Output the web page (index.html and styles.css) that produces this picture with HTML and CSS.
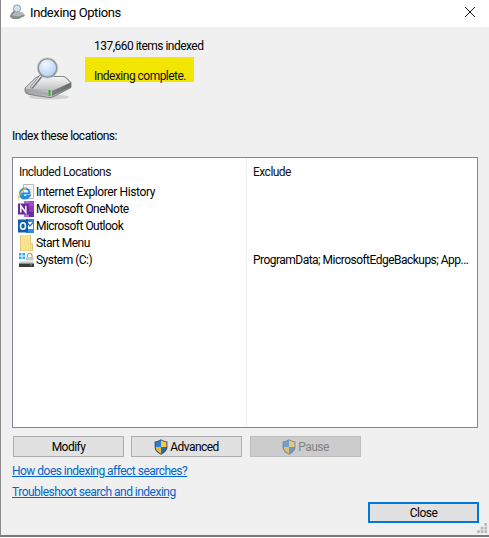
FILE: index.html
```html
<!DOCTYPE html>
<html lang="en">
<head>
<meta charset="utf-8">
<title>Indexing Options</title>
<link rel="stylesheet" href="styles.css">
</head>
<body>
<svg class="defs" width="0" height="0" aria-hidden="true">
  <defs>
    <symbol id="shield" viewBox="0 0 14 16">
      <path d="M7 .2C5.200 1.500 3 2.200 .6 2.400v5.600c0 3.500 2.800 6 6.400 7.800 3.600-1.800 6.400-4.300 6.400-7.800V2.400C11 2.200 8.800 1.500 7 .2z" fill="#46505c"/>
      <path d="M7 1.300V8H1.600V3.300C3.500 3.100 5.400 2.400 7 1.300z" fill="#2a7fd0"/>
      <path d="M7 1.300V8h5.400V3.300C10.500 3.100 8.600 2.400 7 1.300z" fill="#f8c84a"/>
      <path d="M7 8v6.700C4.300 13.300 1.800 11.300 1.600 8z" fill="#f3b62f"/>
      <path d="M7 8v6.700c2.700-1.400 5.200-3.400 5.400-6.700z" fill="#1f6fc0"/>
    </symbol>
  </defs>
</svg>
<div class="window">
  <header class="titlebar">
    <svg class="title-icon" viewBox="0 0 16 16">
      <path d="M1 11 4.500 8H13L15.500 10.500V12L10 15H4L1 13z" fill="#b4b8bb"/>
      <path d="M1 11 9 12.500 15.500 10.500V12L9 15H4L1 13z" fill="#8a8f93"/>
      <rect x="8.500" y="12.800" width="1.200" height="1.800" fill="#3fb52c"/>
      <circle cx="8" cy="4.500" r="3.600" fill="#cfe2f5" stroke="#8f9aa3" stroke-width="1"/>
      <path d="M5.500 7 2.500 10.500" stroke="#7a8085" stroke-width="1.400"/>
    </svg>
    <span class="title-text">Indexing Options</span>
    <svg class="close-x" viewBox="0 0 10 10">
      <path d="M0 0 10 10M10 0 0 10" stroke="#111" stroke-width="1" fill="none"/>
    </svg>
  </header>
  <main class="content">
    <section class="status">
      <svg class="drive" viewBox="0 0 48 48">
        <defs>
          <linearGradient id="driveTop" x1="0" y1="0" x2="0" y2="1">
            <stop offset="0" stop-color="#f4f4f4"/>
            <stop offset="1" stop-color="#c2c4c4"/>
          </linearGradient>
          <linearGradient id="driveFront" x1="0" y1="0" x2="1" y2="0">
            <stop offset="0" stop-color="#9a9d9e"/>
            <stop offset=".55" stop-color="#bfc1c2"/>
            <stop offset="1" stop-color="#6f7274"/>
          </linearGradient>
          <radialGradient id="lens" cx=".4" cy=".3" r=".85">
            <stop offset="0" stop-color="#f2f8fe"/>
            <stop offset="1" stop-color="#a5c6ea"/>
          </radialGradient>
        </defs>
        <ellipse cx="25" cy="41" rx="20" ry="2.500" fill="#000" opacity=".12"/>
        <path d="M1 32 12 21.500Q13 20.500 15 20.500H39Q41 20.500 42.500 22L47 26.500V31.500L30 40.500Q28 41.800 25 41.500L5 38.500Q1 37.500 1 35z" fill="url(#driveFront)" stroke="#717476" stroke-width=".8"/>
        <path d="M1.500 32 12.500 22Q13.500 21 15 21H39Q41 21 42 22.500L46.500 26.500 31 33.500Q29.500 34 27 33.800L3.500 33Q1.500 33 1.500 32z" fill="url(#driveTop)"/>
        <path d="M4 35 24 36.500V39.500L6 37z" fill="#a9acad"/>
        <rect x="24.500" y="34" width="2" height="6" fill="#35b52a"/>
        <path d="M28 35V40L46 30.500V27.500z" fill="#5f6264" opacity=".65"/>
        <path d="M8 31 17 20" stroke="#6a6f72" stroke-width="3.400" stroke-linecap="round"/>
        <path d="M7.500 31 16.500 20" stroke="#dfe1e2" stroke-width="1.300" stroke-linecap="round"/>
        <circle cx="23.500" cy="12" r="9.300" fill="url(#lens)" stroke="#8a949b" stroke-width="1.600"/>
        <circle cx="23.500" cy="12" r="10.400" fill="none" stroke="#c4c9cd" stroke-width=".7"/>
      </svg>
      <div class="status-text">
        <p class="count">137,660 items indexed</p>
        <p class="state">Indexing complete.</p>
      </div>
    </section>
    <p class="locations-label">Index these locations:</p>
    <section class="list">
      <div class="col col-included">
        <div class="col-head">Included Locations</div>
        <div class="row">
          <svg class="row-icon" viewBox="0 0 16 16">
            <path d="M5.500 .5H15.500V14.500H5.500z" fill="#fafafa" stroke="#b9b9b9"/>
            <path d="M10 5.500H13.500M12 8H13.500M12 10.500H13.500" stroke="#c7c7c7"/>
            <path d="M2 9.500H11.500C11.500 6.500 9.500 4.500 7 4.500S2 6.500 2 9.500C2 12.500 4 14.500 7 14.500 9 14.500 10.500 13.500 11.500 12H9C8.500 12.700 7.800 13 7 13 5.500 13 4.500 11.700 4.500 10.500" fill="none" stroke="#1c8fe0" stroke-width="2"/>
            <path d="M1 15.500C-.5 13 3 7 9 3" fill="none" stroke="#f3c13a" stroke-width="1.200"/>
          </svg>
          <span class="row-wide">Internet Explorer History</span>
        </div>
        <div class="row">
          <svg class="row-icon" viewBox="0 0 16 16">
            <path d="M6 0H16V16H6z" fill="#b26ed8"/>
            <path d="M11 0H16V5H11z" fill="#a24bd0"/>
            <path d="M11 5H16V10.500H11z" fill="#8e3bbb"/>
            <path d="M11 10.500H16V16H11z" fill="#6f2a9c"/>
            <rect x="0" y="2.500" width="11" height="11" fill="#6c2a98"/>
            <path d="M2.800 11.500V4.700L7.800 11.500V4.700" fill="none" stroke="#fff" stroke-width="1.500"/>
          </svg>
          <span>Microsoft OneNote</span>
        </div>
        <div class="row">
          <svg class="row-icon" viewBox="0 0 16 16">
            <path d="M8 1H16V15H8z" fill="#2f8fde"/>
            <path d="M9 4H15V11H9z" fill="#fff"/>
            <path d="M9 4.500 12 8 15 4.500" fill="none" stroke="#1d6fbd" stroke-width="1.200"/>
            <rect x="0" y="1.500" width="10" height="13" fill="#0f5fa8"/>
            <ellipse cx="5" cy="8" rx="2.500" ry="3.300" fill="none" stroke="#fff" stroke-width="1.500"/>
          </svg>
          <span>Microsoft Outlook</span>
        </div>
        <div class="row">
          <svg class="row-icon" viewBox="0 0 16 16">
            <path d="M2.500 -.5H12.500V7.500L14.500 9V16H2.500z" fill="#fbe28f" stroke="#d9bc64" stroke-width=".8"/>
            <path d="M12.500 7.500V15.500" stroke="#e9cf78" stroke-width=".8"/>
          </svg>
          <span>Start Menu</span>
        </div>
        <div class="row">
          <svg class="row-icon" viewBox="0 0 16 16">
            <path d="M1 1H3.500V3.500H1zM4.500 1H7V3.500H4.500zM1 4.500H3.500V7H1zM4.500 4.500H7V7H4.500z" fill="#29a8e8"/>
            <path d="M9.500 5V3.500A2.200 2.200 0 0 1 14 3.500V5" fill="none" stroke="#9a9a9a" stroke-width="1.200"/>
            <path d="M8 5H15.500V8.500H8z" fill="#c9c9c9"/>
            <path d="M2 9.500H15L16 11.500H1z" fill="#c8c8c8"/>
            <path d="M1 11.500H16V15H1z" fill="#3a3a3a"/>
            <rect x="12" y="12.500" width="2" height="1" fill="#4bd04b"/>
          </svg>
          <span>System (C:)</span>
        </div>
      </div>
      <div class="col col-exclude">
        <div class="col-head">Exclude</div>
        <div class="row"></div>
        <div class="row"></div>
        <div class="row"></div>
        <div class="row"></div>
        <div class="row"><span>ProgramData; MicrosoftEdgeBackups; App...</span></div>
      </div>
    </section>
    <div class="actions">
      <button class="btn" type="button">Modify</button>
      <button class="btn" type="button"><svg class="shield"><use href="#shield"/></svg>Advanced</button>
      <button class="btn btn-disabled" type="button" disabled><svg class="shield"><use href="#shield"/></svg>Pause</button>
    </div>
    <a class="link link-first" href="#">How does indexing affect searches?</a>
    <a class="link link-second" href="#">Troubleshoot search and indexing</a>
    <div class="footer">
      <button class="btn btn-default" type="button">Close</button>
    </div>
  </main>
  <svg class="grip" viewBox="0 0 12 12" aria-hidden="true">
    <path d="M8 0h3v3H8zM4 4h3v3H4zM8 4h3v3H8zM0 8h3v3H0zM4 8h3v3H4zM8 8h3v3H8z" fill="#b9b9b9"/>
  </svg>
</div>
</body>
</html>
```
FILE: styles.css
```css
* { box-sizing: border-box; }
html, body { margin: 0; padding: 0; background: #fff; }
body {
  width: 489px;
  height: 538px;
  overflow: hidden;
  font-family: "Roboto", "Noto Sans", "Liberation Sans", sans-serif;
  font-size: 12px;
  letter-spacing: -0.52px;
  line-height: 17px;
  color: #111;
}
.defs { position: absolute; }
.window {
  position: relative;
  width: 489px;
  height: 537px;
  background: #f0f0f0;
  border-left: 1px solid #8a8a8a;
  border-bottom: 2px solid #7a7a7a;
  display: flex;
  flex-direction: column;
}
.titlebar {
  height: 27px;
  flex: none;
  background: #fff;
  display: flex;
  align-items: center;
  padding: 0 14px 3px 8px;
}
.title-icon { width: 16px; height: 16px; margin-right: 5px; }
.title-text { flex: 1; color: #000; font-size: 13px; letter-spacing: -0.4px; }
.close-x { width: 10px; height: 10px; }
.content {
  flex: 1;
  display: flex;
  flex-direction: column;
  padding: 0 9px 0 11px;
}
.status { display: flex; height: 88px; padding-left: 12px; }
.drive { width: 48px; height: 48px; margin-top: 29px; flex: none; }
.status-text { margin-left: 13px; display: flex; flex-direction: column; align-items: flex-start; }
.count { margin: 11px 0 0 9px; color: #000; }
.state {
  margin: 2px 0 0;
  width: 109px;
  height: 25px;
  padding: 11px 0 0 9px;
  background: #f2e600;
  line-height: 17px;
  white-space: nowrap;
}
.locations-label { margin: 13px 0 0; color: #000; }
.list {
  margin-top: 12px;
  width: 466px;
  height: 271px;
  background: #fff;
  border: 1px solid #828790;
  display: flex;
  flex: none;
}
.col { display: flex; flex-direction: column; }
.col-included { width: 234px; flex: none; padding-left: 5px; border-right: 1px solid #ebeef3; }
.col-exclude { flex: 1; padding-left: 6px; }
.col-head { height: 25px; padding: 6px 0 0 1px; }
.col-exclude .col-head { padding-left: 0; }
.row { height: 17px; display: flex; align-items: center; white-space: nowrap; color: #000; }
.row span { margin-top: 2px; }
.row .row-wide { letter-spacing: -0.4px; }
.row-icon { width: 16px; height: 16px; margin-right: 2px; flex: none; }
.actions { display: flex; gap: 7px; margin-top: 8px; padding-left: 1px; }
.btn {
  width: 111px;
  height: 21px;
  padding: 2px 0 0;
  background: #e1e1e1;
  border: 1px solid #adadad;
  font: inherit;
  letter-spacing: inherit;
  line-height: 17px;
  color: #000;
  display: flex;
  align-items: center;
  justify-content: center;
}
.btn-disabled { background: #cccccc; border-color: #bfbfbf; color: #838383; margin-left: 1px; }
.btn-disabled .shield { opacity: .55; }
.shield { width: 14px; height: 16px; margin: -2px 2px 0 0; }
.link { color: #0066cc; text-decoration: underline; align-self: flex-start; }
.link-first { margin-top: 6px; }
.link-second { margin-top: 4px; }
.footer { display: flex; justify-content: flex-end; margin-top: 1px; padding-right: 1px; }
.btn-default { border: 2px solid #0078d7; padding-top: 1px; }
.grip { position: absolute; right: 1px; bottom: 1px; width: 11px; height: 11px; }
```
